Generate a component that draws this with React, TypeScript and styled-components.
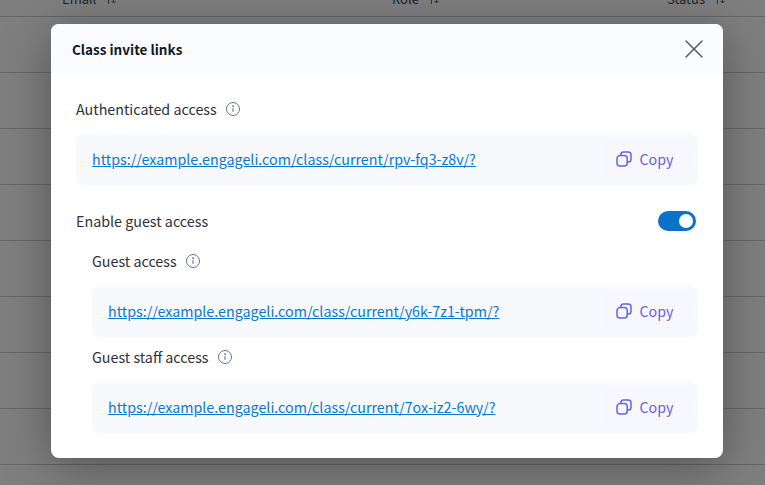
import styled, { createGlobalStyle } from "styled-components";
import { X } from "lucide-react";

const GlobalStyle = createGlobalStyle`
  html, body {
    margin: 0;
    height: 100%;
    overflow: hidden;
    background: #fff;
    font-family: "Noto Sans CJK SC", "Noto Sans", sans-serif;
  }
`;

const Page = styled.div`
  position: relative;
  width: 765px;
  height: 485px;
  overflow: hidden;
`;

const Table = styled.div`
  display: flex;
  flex-direction: column;
  margin-top: -39px;
`;

const HeaderRow = styled.div`
  display: grid;
  grid-template-columns: 330px 275px 1fr;
  align-items: center;
  height: 56px;
  padding: 19px 0 0 62px;
  box-sizing: border-box;
  border-bottom: 1px solid #c8ccd6;
  font-size: 13px;
  color: #404650;
`;

const HeaderCell = styled.div`
  display: flex;
  align-items: center;
  gap: 9px;
`;

const Row = styled.div`
  height: 56px;
  box-sizing: border-box;
  border-bottom: 1px solid #c8ccd6;
`;

const Backdrop = styled.div`
  position: absolute;
  inset: 0;
  background: rgba(0, 0, 0, 0.5);
  display: flex;
  align-items: flex-start;
  justify-content: flex-start;
  padding: 24px 0 0 51px;
  box-sizing: border-box;
`;

const Dialog = styled.div`
  width: 672px;
  height: 434px;
  border-radius: 8px;
  background: #fff;
  overflow: hidden;
  box-shadow: 0 8px 48px rgba(0, 0, 0, 0.35);
`;

const DialogHeader = styled.div`
  height: 49px;
  background: #fbfcff;
  display: flex;
  align-items: center;
  justify-content: space-between;
  padding: 0 13px 0 21px;
`;

const DialogTitle = styled.h2`
  margin: 0;
  font-size: 13.5px;
  font-weight: 600;
  line-height: 20px;
  color: #0f1722;
`;

const CloseButton = styled.button`
  display: flex;
  padding: 0;
  border: 0;
  background: none;
  color: #4e5663;
`;

const DialogBody = styled.div`
  display: flex;
  flex-direction: column;
  padding: 24px 25px 0;
`;

const Label = styled.div`
  display: flex;
  align-items: center;
  gap: 8px;
  height: 24px;
  font-size: 14.3px;
  color: #2c313a;
`;

const RaisedText = styled.span<{ $lift: number }>`
  margin-bottom: ${(p) => p.$lift}px;
`;

const LinkBox = styled.div`
  display: flex;
  align-items: center;
  justify-content: space-between;
  height: 52px;
  margin-top: 12px;
  padding: 0 8px 0 16px;
  border-radius: 8px;
  background: #f8f9fc;
`;

const UrlLink = styled.a`
  margin-bottom: 2px;
  font-size: 14.3px;
  color: #0b78d0;
  text-decoration: underline;
`;

const CopyButton = styled.button`
  display: flex;
  align-items: center;
  justify-content: center;
  gap: 7px;
  width: 87px;
  height: 36px;
  padding: 0 3px 0 0;
  border: 0;
  border-radius: 8px;
  background: #f8f7fe;
  color: #6366d8;
  font-family: inherit;
  font-size: 14.3px;
`;

const ToggleRow = styled.div`
  display: flex;
  align-items: center;
  justify-content: space-between;
  height: 24px;
  margin-top: 25px;
  padding-right: 2px;
  font-size: 14.3px;
  color: #2c313a;
`;

const Toggle = styled.div`
  display: flex;
  align-items: center;
  justify-content: flex-end;
  width: 38px;
  height: 20px;
  margin-bottom: 2px;
  padding: 0 3px;
  box-sizing: border-box;
  border-radius: 10px;
  background: #0b72c9;
`;

const Knob = styled.div`
  width: 14px;
  height: 14px;
  border-radius: 50%;
  background: #fff;
`;

const GuestSection = styled.div`
  display: flex;
  flex-direction: column;
  padding-left: 16px;
`;

const GuestLabel = styled(Label)<{ $top: number }>`
  margin-top: ${(p) => p.$top}px;
`;

const SortIcon = () => (
  <svg width="12" height="14" viewBox="0 0 12 14" fill="none" stroke="#5c6270" strokeWidth="1">
    <path d="M3.5 13V2M1.5 4l2-2 2 2M8.5 1v11M6.5 10l2 2 2-2" />
  </svg>
);

const InfoIcon = () => (
  <svg width="16" height="16" viewBox="0 0 16 16" fill="none" stroke="#6d7385">
    <circle cx="8" cy="8" r="6.5" />
    <path d="M8 7.2v3.6" strokeWidth="1.2" />
    <circle cx="8" cy="5.2" r="0.5" fill="#6d7385" />
  </svg>
);

const CopyIcon = () => (
  <svg width="16" height="16" viewBox="0 0 16 16" fill="none" stroke="currentColor" strokeWidth="1.5">
    <rect x="1" y="4.6" width="10.2" height="10.4" rx="3" />
    <path d="M4.8 4.6V3.8A2.8 2.8 0 0 1 7.6 1h4.6A2.8 2.8 0 0 1 15 3.8v4.4a2.8 2.8 0 0 1-2.8 2.8h-1" />
  </svg>
);

const InviteLink = ({ url }: { url: string }) => (
  <LinkBox>
    <UrlLink href="#">{url}</UrlLink>
    <CopyButton>
      <CopyIcon />
      <RaisedText $lift={2}>Copy</RaisedText>
    </CopyButton>
  </LinkBox>
);

const rows = [1, 2, 3, 4, 5, 6, 7, 8];

export default function App() {
  return (
    <Page>
      <GlobalStyle />
      <Table>
        <HeaderRow>
          <HeaderCell>
            Email <SortIcon />
          </HeaderCell>
          <HeaderCell>
            Role <SortIcon />
          </HeaderCell>
          <HeaderCell>
            Status <SortIcon />
          </HeaderCell>
        </HeaderRow>
        {rows.map((r) => (
          <Row key={r} />
        ))}
      </Table>
      <Backdrop>
        <Dialog>
          <DialogHeader>
            <DialogTitle>Class invite links</DialogTitle>
            <CloseButton>
              <X size={32} strokeWidth={1} />
            </CloseButton>
          </DialogHeader>
          <DialogBody>
            <Label>
              <RaisedText $lift={2}>Authenticated access</RaisedText>
              <InfoIcon />
            </Label>
            <InviteLink url="https://example.engageli.com/class/current/rpv-fq3-z8v/?" />
            <ToggleRow>
              <RaisedText $lift={3}>Enable guest access</RaisedText>
              <Toggle>
                <Knob />
              </Toggle>
            </ToggleRow>
            <GuestSection>
              <GuestLabel $top={15}>
                <RaisedText $lift={2}>Guest access</RaisedText>
                <InfoIcon />
              </GuestLabel>
              <InviteLink url="https://example.engageli.com/class/current/y6k-7z1-tpm/?" />
              <GuestLabel $top={8}>
                <RaisedText $lift={2}>Guest staff access</RaisedText>
                <InfoIcon />
              </GuestLabel>
              <InviteLink url="https://example.engageli.com/class/current/7ox-iz2-6wy/?" />
            </GuestSection>
          </DialogBody>
        </Dialog>
      </Backdrop>
    </Page>
  );
}
